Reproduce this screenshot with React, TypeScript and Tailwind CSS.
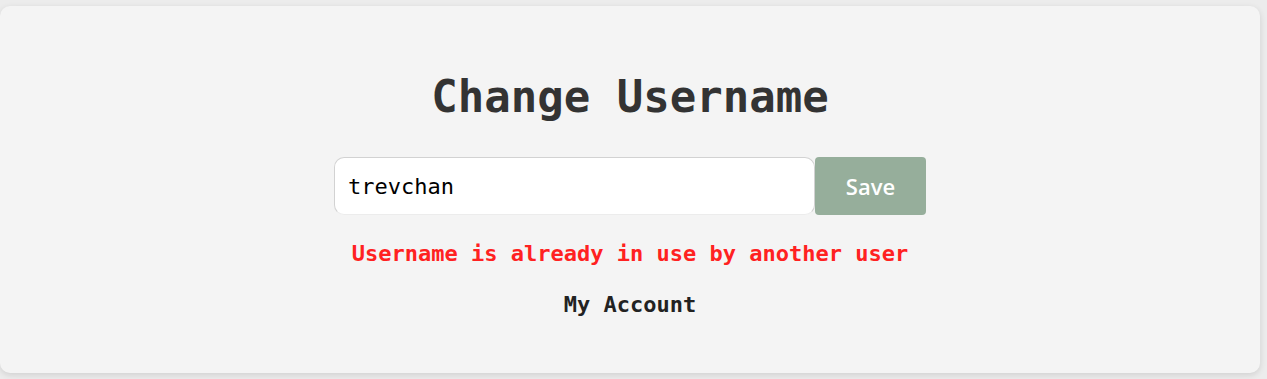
import React from "react";

export default function App() {
  const mono = { fontFamily: '"DejaVu Sans Mono", "Liberation Mono", monospace' };
  return (
    <div className="w-[1267px] h-[379px] bg-[#ececec] pt-[6px] pr-[7px] pb-[6px] overflow-hidden">
      <div
        className="h-full rounded-[10px] bg-[#f4f4f4] shadow-[0_2px_6px_rgba(0,0,0,0.12)] flex flex-col items-center pt-[65px]"
        style={mono}
      >
        <h1 className="text-[44px] leading-[52px] font-bold text-[#333333]">Change Username</h1>
        <div className="mt-[34px] flex items-stretch h-[58px]">
          <input
            defaultValue="trevchan"
            className="w-[481px] h-[58px] rounded-[10px] border border-[#d2d2d2] border-b-[#ececec] bg-white pl-[13px] text-[22px] text-black outline-none"
            style={mono}
          />
          <button
            className="w-[111px] h-[58px] rounded-[4px] bg-[#96ae9b] text-white text-[22px] font-semibold"
            style={{ fontFamily: '"Open Sans", "Noto Sans", sans-serif' }}
          >
            Save
          </button>
        </div>
        <p className="mt-[26px] text-[22px] leading-[26px] font-bold text-[#ff2121]">
          Username is already in use by another user
        </p>
        <a className="mt-[25px] text-[22px] leading-[26px] font-bold text-[#222222]">My Account</a>
      </div>
    </div>
  );
}
